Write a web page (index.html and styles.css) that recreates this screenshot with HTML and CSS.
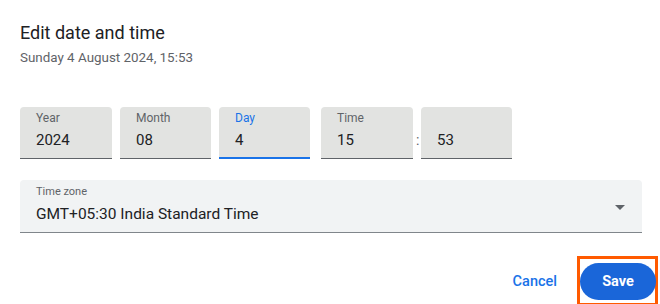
FILE: index.html
```html
<!DOCTYPE html>
<html>
<head>
<meta charset="utf-8">
<link rel="stylesheet" href="styles.css">
</head>
<body>
<div class="dialog">
  <h1 class="title">Edit date and time</h1>
  <div class="subtitle">Sunday 4 August 2024, 15:53</div>
  <div class="fields">
    <div class="field w92"><span class="label">Year</span><span class="value">2024</span></div>
    <div class="field w91"><span class="label">Month</span><span class="value">08</span></div>
    <div class="field w91 focused"><span class="label">Day</span><span class="value">4</span></div>
    <div class="field w92 ml"><span class="label">Time</span><span class="value">15</span></div>
    <span class="colon">:</span>
    <div class="field w91"><span class="label"></span><span class="value">53</span></div>
  </div>
  <div class="tz">
    <span class="tz-label">Time zone</span>
    <span class="tz-value">GMT+05:30 India Standard Time</span>
    <span class="arrow"></span>
  </div>
  <div class="actions">
    <button class="cancel">Cancel</button>
    <div class="highlight"><button class="save">Save</button></div>
  </div>
</div>
</body>
</html>
```
FILE: styles.css
```css
* { box-sizing: border-box; }
html, body { margin: 0; padding: 0; background: #fff; }
body { font-family: Roboto, "Noto Sans", Arial, sans-serif; color: #202124; width: 660px; height: 304px; overflow: hidden; }
.dialog { padding: 22px 18px 0 20px; position: relative; }
.title { margin: 0; font-size: 18px; font-weight: 400; line-height: 22px; color: #202124; }
.subtitle { margin-top: 6px; font-size: 13.4px; line-height: 16px; color: #5f6368; }
.fields { display: flex; align-items: flex-start; margin-top: 41px; gap: 8px; }
.field { height: 52px; background: #e2e3e1; border-radius: 4px 4px 0 0; border-bottom: 1px solid #5f6368; display: flex; flex-direction: column; padding: 4px 0 0 16px; }
.w92 { width: 92px; }
.w91 { width: 91px; }
.ml { margin-left: 3px; }
.field.focused { border-bottom: 2px solid #1a73e8; }
.field.focused .label { color: #1a73e8; }
.label { font-size: 12px; line-height: 14px; height: 14px; color: #5f6368; }
.value { font-size: 15px; line-height: 18px; margin-top: 6px; color: #202124; }
.colon { font-size: 14px; color: #5f6368; width: 0; margin: 25px -3px 0 -5px; }
.tz { margin-top: 21px; width: 622px; height: 53px; background: #f1f3f4; border-radius: 4px 4px 0 0; border-bottom: 1px solid #80868b; position: relative; padding: 5px 0 0 16px; display: flex; flex-direction: column; }
.tz-label { font-size: 11px; line-height: 13px; color: #5f6368; }
.tz-value { font-size: 15.5px; line-height: 20px; margin-top: 6px; color: #202124; }
.arrow { position: absolute; right: 17px; top: 25px; width: 0; height: 0; border-left: 5px solid transparent; border-right: 5px solid transparent; border-top: 5px solid #5f6368; }
.actions { display: flex; justify-content: flex-end; align-items: center; margin-top: 23px; margin-right: -18px; }
.cancel { border: 0; background: none; font-family: inherit; font-size: 14.5px; font-weight: 500; color: #1a73e8; padding: 0; margin-right: 20px; height: 36px; }
.highlight { border: 3px solid #ff5a00; width: 81px; height: 50px; margin-right: 2px; display: flex; align-items: center; justify-content: flex-end; }
.save { border: 0; background: #1a66d9; color: #fff; font-family: inherit; font-size: 14.5px; font-weight: 700; width: 76px; height: 37px; border-radius: 19px; margin-right: -1px; }
```
